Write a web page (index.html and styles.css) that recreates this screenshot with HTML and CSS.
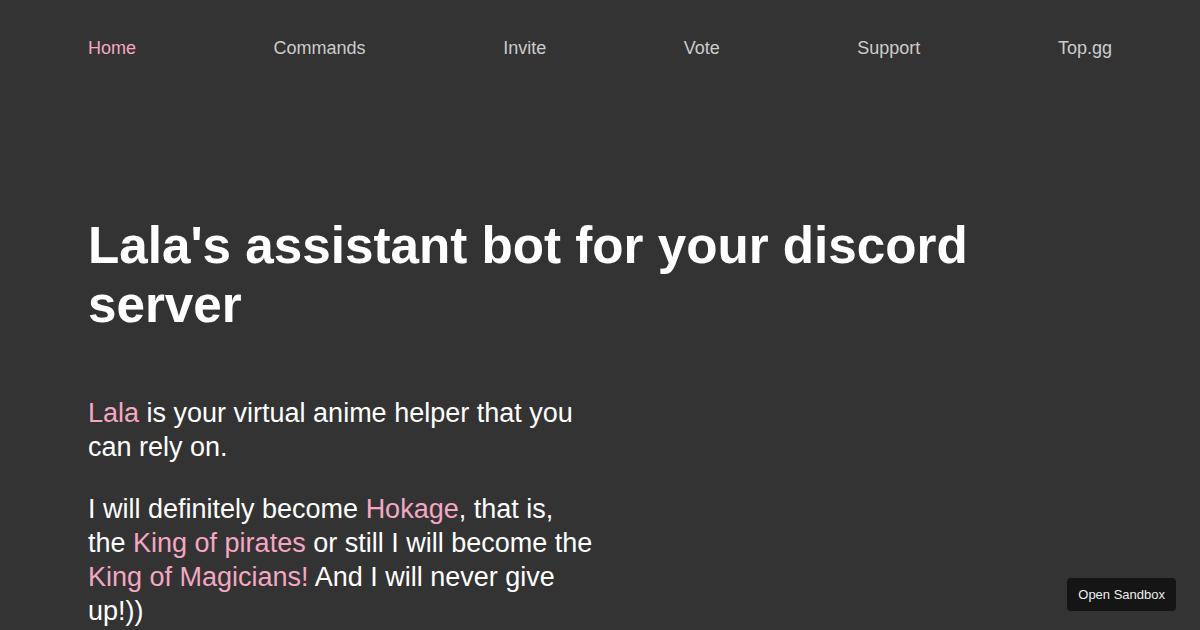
FILE: index.html
```html
<!DOCTYPE html>
<html lang="en">
<head>
    <meta charset="UTF-8">
    <meta name="viewport" content="width=device-width, initial-scale=1.0">
    <title>Lala</title>
    <link rel="stylesheet" href="styles.css">
</head>
<body>
    <div class="container">
        <nav class="nav">
            <a href="#" class="active">Home</a>
            <a href="#">Commands</a>
            <a href="#">Invite</a>
            <a href="#">Vote</a>
            <a href="#">Support</a>
            <a href="#">Top.gg</a>
        </nav>

        <div class="hero">
            <h1>Lala's assistant bot for your discord server</h1>
            <div class="about">
                <p><span class="pink">Lala</span> is your virtual anime helper that you can rely on.</p>
                <p>I will definitely become <span class="pink">Hokage</span>, that is, the <span class="pink">King of pirates</span> or still I will become the <span class="pink">King of Magicians!</span> And I will never give up!))</p>
            </div>
        </div>
    </div>

    <a href="#" class="sandbox">Open Sandbox</a>
</body>
</html>
```

FILE: styles.css
```css
body {
    font-family: "Liberation Sans", Arial, sans-serif;
    margin: 0;
    background-color: #333333;
    color: #ffffff;
}
.container {
    padding: 0 88px;
}
.nav {
    display: flex;
    justify-content: space-between;
    padding-top: 38px;
}
.nav a {
    font-size: 18px;
    color: #cccccc;
    text-decoration: none;
}
.nav a.active {
    color: #f4a7c2;
}
.hero {
    padding-top: 157px;
}
h1 {
    font-size: 51.2px;
    margin: 0;
    max-width: 900px;
}
.about {
    max-width: 508px;
    margin-top: 62px;
}
.about p {
    font-size: 27px;
    line-height: 34px;
    margin: 0 0 28px;
}
.pink {
    color: #f4a7c2;
}
.sandbox {
    position: fixed;
    right: 24px;
    bottom: 19px;
    background: #151515;
    color: #eeeeee;
    font-size: 13px;
    text-decoration: none;
    padding: 9px 11px;
    border-radius: 4px;
}
```
